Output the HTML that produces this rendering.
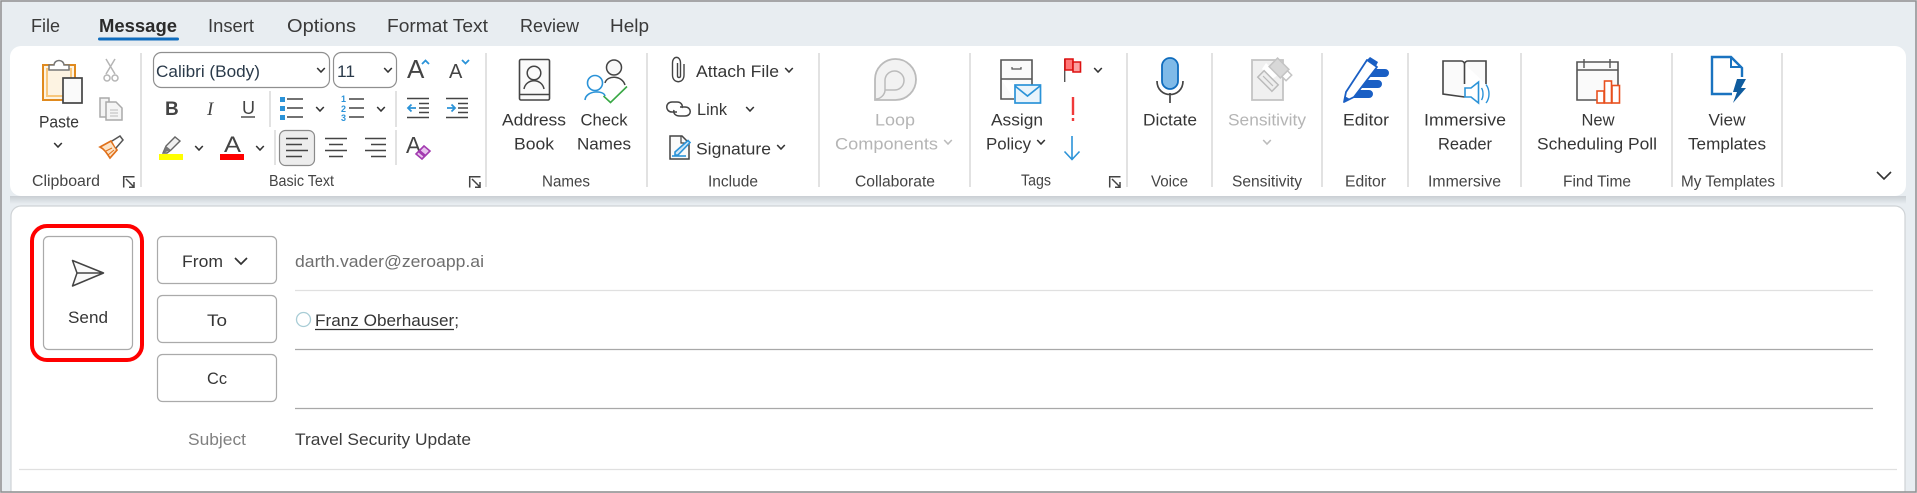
<!DOCTYPE html>
<html><head><meta charset="utf-8"><style>
html,body{margin:0;padding:0;width:1917px;height:493px;overflow:hidden;background:#e8edf1}
svg{display:block}
text{font-family:"Liberation Sans",sans-serif;font-size:16.5px;fill:#363636}
.t{font-size:18px;fill:#3a3a3a}
.l{font-size:15.5px;fill:#444}
.m{text-anchor:middle}
.d{fill:#b5b5b5}
</style></head><body>
<svg width="1917" height="493" viewBox="0 0 1917 493" xmlns="http://www.w3.org/2000/svg">
<defs>
<path id="c" d="M-3.8-2L0 2L3.8-2" fill="none" stroke="#333" stroke-width="1.6"/>
<path id="cg" d="M-3.8-2L0 2L3.8-2" fill="none" stroke="#bbb" stroke-width="1.6"/>
<g id="dl"><path d="M0.7 11.5V0.7H11.5M3 3L11 11M11 6V11.2H6" fill="none" stroke="#444" stroke-width="1.5"/></g>
<linearGradient id="sh" x1="0" y1="0" x2="0" y2="1"><stop offset="0" stop-color="#c9ced3"/><stop offset="1" stop-color="#e8edf1"/></linearGradient>
</defs>
<rect width="1917" height="493" fill="#e8edf1"/>

<!-- tabs -->
<text class="t" x="31" y="32" textLength="29" lengthAdjust="spacingAndGlyphs">File</text>
<text class="t" x="99" y="32" textLength="78" lengthAdjust="spacingAndGlyphs" style="font-weight:bold;fill:#2b2b2b">Message</text>
<rect x="98" y="37.5" width="81" height="3" rx="1.5" fill="#0f6cbd"/>
<text class="t" x="208" y="32" textLength="46" lengthAdjust="spacingAndGlyphs">Insert</text>
<text class="t" x="287" y="32" textLength="69" lengthAdjust="spacingAndGlyphs">Options</text>
<text class="t" x="387" y="32" textLength="101" lengthAdjust="spacingAndGlyphs">Format Text</text>
<text class="t" x="520" y="32" textLength="59" lengthAdjust="spacingAndGlyphs">Review</text>
<text class="t" x="610" y="32" textLength="39" lengthAdjust="spacingAndGlyphs">Help</text>

<!-- ribbon -->
<rect x="10" y="196" width="1896" height="8" fill="url(#sh)"/>
<rect x="10" y="46" width="1896" height="150" rx="11" fill="#fff"/>
<path stroke="#cfcfcf" stroke-width="1.2" d="M141 53V187M486 53V187M647 53V187M819 53V187M970 53V187M1127 53V187M1212 53V187M1322 53V187M1408 53V187M1521 53V187M1672 53V187M1782 53V187M270 91V127M396 91V127M275 130V165M396 130V165"/>

<!-- group labels -->
<text class="l" x="32" y="186" textLength="68" lengthAdjust="spacingAndGlyphs">Clipboard</text>
<text class="l" x="269" y="186" textLength="65" lengthAdjust="spacingAndGlyphs">Basic Text</text>
<text class="l" x="542" y="186.500" textLength="48" lengthAdjust="spacingAndGlyphs">Names</text>
<text class="l" x="708" y="186.500" textLength="50" lengthAdjust="spacingAndGlyphs">Include</text>
<text class="l" x="855" y="186.500" textLength="80" lengthAdjust="spacingAndGlyphs">Collaborate</text>
<text class="l" x="1021" y="185.500" textLength="30" lengthAdjust="spacingAndGlyphs">Tags</text>
<text class="l" x="1151" y="186.500" textLength="37" lengthAdjust="spacingAndGlyphs">Voice</text>
<text class="l" x="1232" y="186.500" textLength="70" lengthAdjust="spacingAndGlyphs">Sensitivity</text>
<text class="l" x="1345" y="186.500" textLength="41" lengthAdjust="spacingAndGlyphs">Editor</text>
<text class="l" x="1428" y="186.500" textLength="73" lengthAdjust="spacingAndGlyphs">Immersive</text>
<text class="l" x="1563" y="186.500" textLength="68" lengthAdjust="spacingAndGlyphs">Find Time</text>
<text class="l" x="1681" y="186.500" textLength="94" lengthAdjust="spacingAndGlyphs">My Templates</text>
<use href="#dl" x="123" y="176"/><use href="#dl" x="469" y="176"/><use href="#dl" x="1109" y="176"/>
<path d="M1877 172L1884 179L1891 172" fill="none" stroke="#333" stroke-width="1.6"/>

<!-- Clipboard -->
<path d="M43 65H75V100H43Z" fill="#fdf3e2" stroke="#e08a1e" stroke-width="2"/>
<path d="M47 69H71V96H47Z" fill="none" stroke="#f8c77c" stroke-width="2"/>
<path d="M49 70V65H54C54.500 59 63.500 59 64 65H69V70Z" fill="#fff" stroke="#777" stroke-width="1.500"/>
<rect x="63" y="78" width="19" height="25" fill="#fafafa" stroke="#444" stroke-width="1.700"/>
<text x="39" y="127.500" textLength="40" lengthAdjust="spacingAndGlyphs">Paste</text>
<use href="#c" x="58" y="145"/>
<g fill="none" stroke="#b5b5b5" stroke-width="1.500"><path d="M106 59L115 74M115 59L106 74"/><circle cx="107" cy="78" r="3"/><circle cx="115" cy="78" r="3"/></g>
<path d="M100 98H109V117H100Z" fill="#f3f3f3" stroke="#aaa" stroke-width="1.500"/>
<path d="M106 102H116L122 108V120H106Z" fill="#f5f5f5" stroke="#aaa" stroke-width="1.500"/><path d="M110 110H118M110 113H118M110 116H118" stroke="#bbb"/>
<path d="M100 147L111 141L117 150L110 158C106 152 104 149 100 147Z" fill="#fce3c6" stroke="#e0701a" stroke-width="1.700"/><path d="M106 151L112 148M108 155L114 150" stroke="#e0701a"/>
<path d="M112 141L120 136L123 140L116 148" fill="#fff" stroke="#555" stroke-width="1.500"/>

<!-- Font -->
<rect x="153.500" y="52.500" width="176" height="35" rx="8" fill="#fff" stroke="#8f8f8f" stroke-width="1.200"/>
<text x="156" y="77" textLength="104" lengthAdjust="spacingAndGlyphs" style="font-size:17px;fill:#2a3a4a">Calibri (Body)</text>
<use href="#c" x="321" y="70"/>
<rect x="333.500" y="52.500" width="63" height="35" rx="8" fill="#fff" stroke="#8f8f8f" stroke-width="1.200"/>
<text x="337" y="77" textLength="18" lengthAdjust="spacingAndGlyphs" style="font-size:17px;fill:#2a3a4a">11</text>
<use href="#c" x="388" y="70"/>
<text x="407" y="78" style="font-size:26px;fill:#444">A</text><path d="M422 64L425.500 60.500L429 64" fill="none" stroke="#2b93d8" stroke-width="1.800"/>
<text x="449" y="78" style="font-size:20px;fill:#444">A</text><path d="M462 60L465.500 63.500L469 60" fill="none" stroke="#2b93d8" stroke-width="1.800"/>

<text x="165" y="115" style="font-size:19px;font-weight:bold;fill:#444">B</text>
<text x="207" y="115" style="font-size:19px;font-style:italic;fill:#444;font-family:'Liberation Serif',serif">I</text>
<text x="242" y="114" style="font-size:18px;fill:#444">U</text><path d="M241 117H255" stroke="#444" stroke-width="1.400"/>

<g fill="#2b93d8"><rect x="280" y="97" width="5" height="5"/><rect x="280" y="106" width="5" height="5"/><rect x="280" y="115" width="5" height="5"/></g>
<path d="M287 99H303M287 108H303M287 117H303" stroke="#444" stroke-width="1.500"/>
<use href="#c" x="320" y="109"/>
<text x="341" y="102" style="font-size:9px;font-weight:bold;fill:#2b93d8">1</text><text x="341" y="112" style="font-size:9px;font-weight:bold;fill:#2b93d8">2</text><text x="341" y="121" style="font-size:9px;font-weight:bold;fill:#2b93d8">3</text>
<path d="M349 99H364M349 108H364M349 117H364" stroke="#444" stroke-width="1.500"/>
<use href="#c" x="381" y="109"/>
<path d="M407 98.500H429M419 103.500H429M419 108H429M419 112.500H429M407 117.500H429" stroke="#444" stroke-width="1.500"/><path d="M416 108H408M411.500 104.500L408 108L411.500 111.500" fill="none" stroke="#2b93d8" stroke-width="1.800"/>
<path d="M446 98.500H468M458 103.500H468M458 108H468M458 112.500H468M446 117.500H468" stroke="#444" stroke-width="1.500"/><path d="M447 108H455M451.500 104.500L455 108L451.500 111.500" fill="none" stroke="#2b93d8" stroke-width="1.800"/>

<path d="M163 153L166 146L175 137L180 141L171 150L167 153Z" fill="#f0f0f0" stroke="#666" stroke-width="1.400"/><path d="M163 153L166 146L171 150Z" fill="#777"/>
<rect x="159" y="154" width="24" height="6" fill="#ff0"/>
<use href="#c" x="199" y="148"/>
<text x="224" y="152" textLength="17" lengthAdjust="spacingAndGlyphs" style="font-size:22px;fill:#444">A</text>
<rect x="220" y="154" width="24" height="6" fill="#f00"/>
<use href="#c" x="260" y="148"/>
<rect x="279.500" y="130.500" width="35" height="35" rx="6" fill="#ededed" stroke="#8a8a8a" stroke-width="1.200"/>
<path d="M286 138.500H308M286 144.500H302M286 150.500H308M286 156.500H302" stroke="#444" stroke-width="1.500"/>
<path d="M325 138.500H347M329 144.500H343M325 150.500H347M329 156.500H343" stroke="#444" stroke-width="1.500"/>
<path d="M365 138.500H386M371 144.500H386M365 150.500H386M371 156.500H386" stroke="#444" stroke-width="1.500"/>
<text x="406" y="153" textLength="15" lengthAdjust="spacingAndGlyphs" style="font-size:23px;fill:#444">A</text>
<path d="M416 154L424 146L430 151L422 159Z" fill="#e8c4ee" stroke="#a33bb0" stroke-width="1.600"/><path d="M419 151L425 156" stroke="#a33bb0" stroke-width="3"/>

<!-- Names -->
<rect x="519.500" y="59.500" width="30" height="40.500" rx="1.500" fill="#fafafa" stroke="#444" stroke-width="1.600"/>
<path d="M520 94.500H549" stroke="#444" stroke-width="1.400"/>
<circle cx="534" cy="73" r="6.800" fill="none" stroke="#444" stroke-width="1.500"/><path d="M524 89C526 78 542 78 544 89" fill="none" stroke="#444" stroke-width="1.500"/>
<text class="m" x="534" y="125.500" textLength="64" lengthAdjust="spacingAndGlyphs">Address</text>
<text class="m" x="534" y="149.500" textLength="40" lengthAdjust="spacingAndGlyphs">Book</text>
<circle cx="614" cy="67.500" r="7.500" fill="#f8f8f8" stroke="#444" stroke-width="1.500"/><path d="M605 83C607 75 622 75 625 85" fill="none" stroke="#444" stroke-width="1.500"/>
<circle cx="595" cy="83" r="7.500" fill="#fff" stroke="#2b93d8" stroke-width="1.600"/><path d="M585 100C586 90 604 90 605 96" fill="none" stroke="#2b93d8" stroke-width="1.600"/>
<path d="M603.500 96L610.500 102.500L627 86.500" fill="none" stroke="#39a845" stroke-width="1.600"/>
<text class="m" x="604" y="125.500" textLength="47" lengthAdjust="spacingAndGlyphs">Check</text>
<text class="m" x="604" y="149.500" textLength="54" lengthAdjust="spacingAndGlyphs">Names</text>

<!-- Include -->
<path d="M677.500 63V76C677.500 78 680.500 78 680.500 76V63C680.500 55.500 672.500 55.500 672.500 63V75C672.500 84 684 84 684 75V64" fill="none" stroke="#444" stroke-width="1.400"/>
<text x="696" y="77" textLength="83" lengthAdjust="spacingAndGlyphs">Attach File</text>
<use href="#c" x="789" y="70"/>
<path d="M677 112H672C665 112 665 102 672 102H677C681 102 683 105 682 108M680 107H685C692 107 692 116 685 116H680C675 116 673 113 674 110" fill="none" stroke="#444" stroke-width="1.500"/>
<text x="697" y="115" textLength="30" lengthAdjust="spacingAndGlyphs">Link</text>
<use href="#c" x="750" y="109"/>
<path d="M670 136H682L689 143V159H670Z" fill="#fafafa" stroke="#444" stroke-width="1.500"/><path d="M681 136V143H689" fill="none" stroke="#444" stroke-width="1.200"/>
<path d="M675 152L688 140.500L690 142.500L678 155H675Z" fill="#cfe6f7" stroke="#2b93d8" stroke-width="1.600"/><path d="M672 156H686" stroke="#2b93d8" stroke-width="1.600"/>
<text x="696" y="154.500" textLength="75" lengthAdjust="spacingAndGlyphs">Signature</text>
<use href="#c" x="781" y="147"/>

<!-- Loop -->
<path d="M875 100V80A20.500 20.500 0 1 1 895.500 100Z" fill="#f2f2f2" stroke="#bbb" stroke-width="1.800"/>
<path d="M885 80A9.500 9.500 0 1 1 894 90H885Z M885 80V90C885 95 880 99 876 99" fill="#f2f2f2" stroke="#bbb" stroke-width="1.500"/>
<text class="m d" x="895" y="125.500" textLength="40" lengthAdjust="spacingAndGlyphs">Loop</text>
<text class="d" x="835" y="149.500" textLength="103" lengthAdjust="spacingAndGlyphs">Components</text>
<use href="#cg" x="948" y="142"/>

<!-- Tags -->
<path d="M1001 60H1032V79H1001ZM1001 79H1032V88M1014 99H1001V79" fill="#fafafa" stroke="#555" stroke-width="1.600"/><path d="M1012 67V69H1021V67" fill="none" stroke="#555" stroke-width="1.200"/>
<rect x="1015" y="85" width="25.500" height="18" fill="#eaf4fb" stroke="#2b93d8" stroke-width="1.700"/><path d="M1015 86L1027.500 96L1040 86" fill="none" stroke="#2b93d8" stroke-width="1.700"/>
<text class="m" x="1017" y="125.500" textLength="52" lengthAdjust="spacingAndGlyphs">Assign</text>
<text x="986" y="149.500" textLength="45" lengthAdjust="spacingAndGlyphs">Policy</text>
<use href="#c" x="1041" y="142"/>
<path d="M1064.700 82V59" stroke="#555" stroke-width="1.400"/>
<path d="M1065 59H1073V70H1065Z" fill="#f77" stroke="#d11" stroke-width="1.600"/><path d="M1073 62H1080.500V72H1073Z" fill="#fba0a0" stroke="#d11" stroke-width="1.600"/>
<use href="#c" x="1098" y="70"/>
<path d="M1073 97V115M1073 118V121" stroke="#f03a3a" stroke-width="2.400"/>
<path d="M1072 136V159M1064.500 151.500L1072 159.500L1079.500 151.500" fill="none" stroke="#2b93d8" stroke-width="1.600"/>

<!-- Voice -->
<rect x="1162" y="58" width="16" height="31" rx="8" fill="#7fbae8" stroke="#0f6cbd" stroke-width="1.800"/>
<path d="M1157 81C1157 99 1183 99 1183 81M1170 93V103" fill="none" stroke="#444" stroke-width="1.700"/>
<text class="m" x="1170" y="125.500" textLength="54" lengthAdjust="spacingAndGlyphs">Dictate</text>

<!-- Sensitivity -->
<rect x="1252" y="60" width="31" height="40" fill="#f0f0f0" stroke="#c4c4c4" stroke-width="1.800"/>
<path d="M1266 63L1278 75L1272 79L1262 69Z" fill="#fff"/>
<g transform="rotate(45 1279 68)"><rect x="1271" y="62" width="16" height="12" fill="#d8d8d8" stroke="#c4c4c4" stroke-width="1.500"/><rect x="1287" y="64" width="6" height="8" fill="#fff" stroke="#c4c4c4" stroke-width="1.500"/></g>
<g transform="rotate(45 1268 81)"><rect x="1258" y="76.500" width="20" height="9" fill="#eee" stroke="#bbb" stroke-width="1.500"/><path d="M1261 81H1275" stroke="#bbb" stroke-width="1.200"/></g>
<text class="m d" x="1267" y="125.500" textLength="78" lengthAdjust="spacingAndGlyphs">Sensitivity</text>
<use href="#cg" x="1267" y="142"/>

<!-- Editor -->
<path d="M1372 69H1385A4 4 0 0 1 1385 77H1366ZM1362 80H1378A4 4 0 0 1 1378 88H1356ZM1352 90H1369A4 4 0 0 1 1369 98H1348Z" fill="#1a5fc4"/>
<path d="M1344 102L1346 92L1367 60L1377 67L1354 97Z" fill="#fff" stroke="#1a5fc4" stroke-width="1.800" stroke-linejoin="round"/>
<path d="M1367 60L1370 57L1378 62L1376 66Z" fill="#1a5fc4"/>
<path d="M1343.500 103L1344.500 96L1350 99Z" fill="#1a5fc4"/>
<text class="m" x="1366" y="125.500" textLength="46" lengthAdjust="spacingAndGlyphs">Editor</text>

<!-- Immersive -->
<path d="M1464.500 97L1443 94V61H1461C1463 61 1464.500 62.500 1464.500 64V84M1464.500 64C1464.500 62.500 1466 61 1468 61H1486V84" fill="#fafafa" stroke="#444" stroke-width="1.600"/>
<path d="M1465 88H1471L1478.500 82V103L1471 97H1465Z" fill="#fff" stroke="#2b93d8" stroke-width="1.600"/>
<path d="M1481.500 88C1483.500 91 1483.500 97 1481.500 100M1486 84.500C1490 90 1490 98 1486 103" fill="none" stroke="#2b93d8" stroke-width="1.400"/>
<text class="m" x="1465" y="125.500" textLength="82" lengthAdjust="spacingAndGlyphs">Immersive</text>
<text class="m" x="1465" y="149.500" textLength="54" lengthAdjust="spacingAndGlyphs">Reader</text>

<!-- Poll -->
<path d="M1577 62H1618V100H1577ZM1577 70H1618" fill="#fafafa" stroke="#555" stroke-width="1.600"/><path d="M1584 59V68M1610 59V68" stroke="#555" stroke-width="1.400"/>
<rect x="1597" y="91" width="7" height="12" fill="#fff" stroke="#e8501e" stroke-width="1.600"/><rect x="1604.500" y="81" width="7" height="22" fill="#fff" stroke="#e8501e" stroke-width="1.600"/><rect x="1612" y="85.500" width="7.500" height="17.500" fill="#fff" stroke="#e8501e" stroke-width="1.600"/>
<text class="m" x="1598" y="125.500" textLength="33" lengthAdjust="spacingAndGlyphs">New</text>
<text class="m" x="1597" y="149.500" textLength="120" lengthAdjust="spacingAndGlyphs">Scheduling Poll</text>

<!-- Templates -->
<path d="M1732 94H1712V57H1731L1742 68V77" fill="none" stroke="#1a73c0" stroke-width="2.400"/><path d="M1731 57V67H1742" fill="none" stroke="#1a73c0" stroke-width="2"/>
<path d="M1737 79H1746L1741 88H1746L1733 103L1737 92H1733Z" fill="#0f5c9e"/>
<text class="m" x="1727" y="125.500" textLength="37" lengthAdjust="spacingAndGlyphs">View</text>
<text class="m" x="1727" y="149.500" textLength="78" lengthAdjust="spacingAndGlyphs">Templates</text>

<!-- Compose -->
<path d="M11 492V216A10 10 0 0 1 21 206H1895A10 10 0 0 1 1905 216V492Z" fill="#fff" stroke="#cfd3d6" stroke-width="1.200"/>
<rect x="1" y="1" width="1915" height="491" fill="none" stroke="#8f8f8f" stroke-width="1.500"/>
<rect x="32" y="226" width="110" height="134" rx="15" fill="none" stroke="#f00" stroke-width="4"/>
<rect x="43.500" y="236.500" width="89" height="113" rx="5" fill="#fff" stroke="#aaa" stroke-width="1.200"/>
<path d="M72.500 260.500L103.500 273L72.500 286L77 273Z M77 273H103.500" fill="#fafafa" stroke="#444" stroke-width="1.500" stroke-linejoin="round"/>
<text class="m" x="88" y="323" textLength="40" lengthAdjust="spacingAndGlyphs">Send</text>
<rect x="157.500" y="236.500" width="119" height="47" rx="5" fill="#fff" stroke="#aaa" stroke-width="1.200"/>
<rect x="157.500" y="295.500" width="119" height="47" rx="5" fill="#fff" stroke="#aaa" stroke-width="1.200"/>
<rect x="157.500" y="354.500" width="119" height="47" rx="5" fill="#fff" stroke="#aaa" stroke-width="1.200"/>
<text x="182" y="267" textLength="41" lengthAdjust="spacingAndGlyphs">From</text>
<path d="M235 258L241 264L247 258" fill="none" stroke="#333" stroke-width="1.700"/>
<text class="m" x="217" y="326" textLength="20" lengthAdjust="spacingAndGlyphs">To</text>
<text class="m" x="217" y="384" textLength="20" lengthAdjust="spacingAndGlyphs">Cc</text>
<text x="188" y="445" textLength="58" lengthAdjust="spacingAndGlyphs" style="fill:#808080">Subject</text>
<text x="295" y="267" textLength="189" lengthAdjust="spacingAndGlyphs" style="fill:#6e6e6e">darth.vader@zeroapp.ai</text>
<path d="M295 290.500H1873" stroke="#e0e0e0" stroke-width="1.200"/>
<path d="M295 349.500H1873M295 408.500H1873" stroke="#a8a8a8" stroke-width="1.200"/>
<path d="M19 469.500H1897" stroke="#e0e0e0" stroke-width="1.200"/>
<circle cx="303.500" cy="319.500" r="7" fill="#fff" stroke="#a9cdd6" stroke-width="1.300"/>
<text x="315" y="326" textLength="144" lengthAdjust="spacingAndGlyphs">Franz Oberhauser;</text>
<path d="M315 329.500H454" stroke="#333" stroke-width="1.200"/>
<text x="295" y="445" textLength="176" lengthAdjust="spacingAndGlyphs" style="fill:#3c3c3c">Travel Security Update</text>
</svg>
</body></html>
